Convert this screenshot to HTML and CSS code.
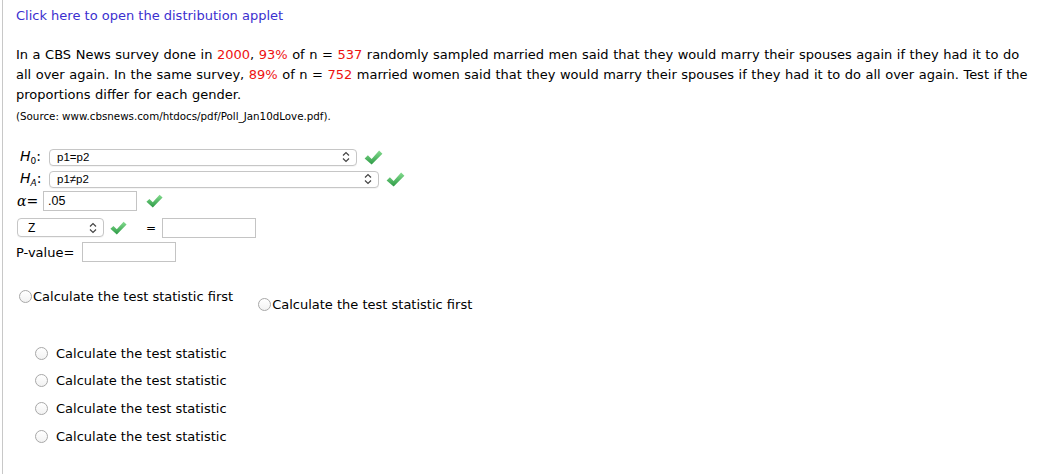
FILE: index.html
```html
<!DOCTYPE html>
<html>
<head>
<meta charset="utf-8">
<link rel="stylesheet" href="styles.css">
</head>
<body>
<div class="page">
  <a class="applet" href="#">Click here to open the distribution applet</a>
  <p class="question">In a CBS News survey done in <span class="red">2000</span>, <span class="red">93%</span> of n = <span class="red">537</span> randomly sampled married men said that they would marry their spouses again if they had it to do all over again. In the same survey, <span class="red">89%</span> of n = <span class="red">752</span> married women said that they would marry their spouses if they had it to do all over again. Test if the proportions differ for each gender.</p>
  <p class="source">(Source: www.cbsnews.com/htdocs/pdf/Poll_Jan10dLove.pdf).</p>

  <div class="form">
    <div class="row hyp">
      <span class="hlabel"><i>H</i><sub>0</sub>:</span>
      <div class="select sel-h0"><span>p1=p2</span><svg class="arrows" viewBox="0 0 8 12" width="8" height="12"><path d="M1 4.5 L4 1.5 L7 4.5 M1 7.5 L4 10.5 L7 7.5" fill="none" stroke="#444" stroke-width="1.2"/></svg></div>
      <svg class="check" viewBox="0 0 20 16" width="19" height="15"><defs><linearGradient id="g1" x1="0" y1="0" x2="0" y2="1"><stop offset="0" stop-color="#86dd90"/><stop offset="1" stop-color="#2c9a45"/></linearGradient></defs><path d="M0.5 9 L4 5.5 L8 9.5 L16 0.5 L19.5 4 L8 15.5 Z" fill="url(#g1)"/></svg>
    </div>
    <div class="row hyp">
      <span class="hlabel"><i>H</i><sub><i>A</i></sub>:</span>
      <div class="select sel-ha"><span>p1≠p2</span><svg class="arrows" viewBox="0 0 8 12" width="8" height="12"><path d="M1 4.5 L4 1.5 L7 4.5 M1 7.5 L4 10.5 L7 7.5" fill="none" stroke="#444" stroke-width="1.2"/></svg></div>
      <svg class="check" viewBox="0 0 20 16" width="19" height="15"><path d="M0.5 9 L4 5.5 L8 9.5 L16 0.5 L19.5 4 L8 15.5 Z" fill="url(#g1)"/></svg>
    </div>
    <div class="row alpha">
      <span class="alabel"><i>α</i>=</span>
      <div class="input in-alpha">.05</div>
      <svg class="check" viewBox="0 0 20 16" width="17" height="14"><path d="M0.5 9 L4 5.5 L8 9.5 L16 0.5 L19.5 4 L8 15.5 Z" fill="url(#g1)"/></svg>
    </div>
    <div class="row zrow">
      <div class="select sel-z"><span>Z</span><svg class="arrows" viewBox="0 0 8 12" width="8" height="12"><path d="M1 4.5 L4 1.5 L7 4.5 M1 7.5 L4 10.5 L7 7.5" fill="none" stroke="#444" stroke-width="1.2"/></svg></div>
      <svg class="check" viewBox="0 0 20 16" width="17" height="14"><path d="M0.5 9 L4 5.5 L8 9.5 L16 0.5 L19.5 4 L8 15.5 Z" fill="url(#g1)"/></svg>
      <span class="eq">=</span>
      <div class="input in-z"></div>
    </div>
    <div class="row prow">
      <span class="plabel">P-value=</span>
      <div class="input in-p"></div>
    </div>
  </div>

  <div class="choices">
    <label class="choice c1"><span class="radio"></span>Calculate the test statistic first</label>
    <label class="choice c2"><span class="radio"></span>Calculate the test statistic first</label>
  </div>

  <ul class="options">
    <li><span class="radio"></span>Calculate the test statistic</li>
    <li><span class="radio"></span>Calculate the test statistic</li>
    <li><span class="radio"></span>Calculate the test statistic</li>
    <li><span class="radio"></span>Calculate the test statistic</li>
  </ul>
</div>
</body>
</html>
```

FILE: styles.css
```css
html, body {
  margin: 0;
  padding: 0;
  background: #fff;
  height: 100%;
}
.page {
  margin-left: 2px;
  border-left: 1px solid #c8c8c8;
  min-height: 474px;
  box-sizing: border-box;
  padding: 8px 15px 0 13px;
  font-family: "DejaVu Sans", Verdana, sans-serif;
  font-size: 13px;
  color: #000;
}
.applet {
  display: block;
  color: #3b2fcf;
  text-decoration: none;
  line-height: 16px;
}
.question {
  margin: 21px 0 0 0;
  line-height: 20px;
  word-spacing: 0.4px;
}
.red { color: #ee1111; }
.source {
  margin: 3px 0 0 0;
  font-size: 10.3px;
  line-height: 16px;
}
.form {
  margin-top: 22px;
  display: flex;
  flex-direction: column;
}
.row {
  display: flex;
  align-items: center;
}
.hyp { height: 22px; }
.hlabel {
  width: 33px;
  padding-left: 4px;
  box-sizing: border-box;
  font-size: 14px;
  font-family: "DejaVu Sans", sans-serif;
}
.hlabel sub { font-size: 9px; vertical-align: -3px; }
.select {
  height: 17px;
  box-sizing: border-box;
  border: 1px solid #c6c6c6;
  border-radius: 4px;
  background: #fff;
  display: flex;
  align-items: center;
  justify-content: space-between;
  padding: 0 6px 0 7px;
  font-family: "Liberation Sans", Arial, sans-serif;
  font-size: 11.5px;
  box-shadow: 0 1px 0 rgba(0,0,0,0.04);
}
.sel-h0 { width: 308px; }
.sel-ha { width: 330px; }
.check { margin-left: 7px; }
.alpha { height: 22px; }
.alabel { width: 26px; padding-left: 1px; font-size: 14px; }
.alabel i { font-family: "DejaVu Serif", serif; }
.input {
  box-sizing: border-box;
  height: 20px;
  border: 1px solid #c4c4c4;
  font-family: "Liberation Sans", Arial, sans-serif;
  font-size: 12.5px;
  line-height: 18px;
  padding-left: 4px;
}
.in-alpha { width: 94px; }
.alpha .check { margin-left: 9px; }
.zrow { margin-top: 5px; height: 21px; }
.sel-z { width: 87px; height: 19px; margin-left: 1px; font-size: 12px; padding-left: 10px; }
.zrow .check { margin-left: 6px; }
.eq { margin-left: 19px; font-size: 12px; }
.in-z { width: 94px; margin-left: 6px; }
.prow { margin-top: 3px; height: 22px; }
.plabel { width: 66px; }
.in-p { width: 94px; }
.choices {
  margin-top: 24px;
  display: flex;
  align-items: flex-start;
}
.choice {
  display: flex;
  align-items: center;
  height: 18px;
}
.c1 { margin-left: 3px; }
.c2 { margin-left: 25px; margin-top: 8px; }
.radio {
  display: inline-block;
  width: 13px;
  height: 13px;
  box-sizing: border-box;
  border: 1px solid #a8a8a8;
  border-radius: 50%;
  background: linear-gradient(#fff, #f2f2f2);
  margin-right: 1px;
}
.options {
  list-style: none;
  margin: 31px 0 0 0;
  padding: 0 0 0 19px;
}
.options li {
  display: flex;
  align-items: center;
  height: 18px;
  margin-bottom: 9.7px;
}
.options .radio { margin-right: 8px; }
```
